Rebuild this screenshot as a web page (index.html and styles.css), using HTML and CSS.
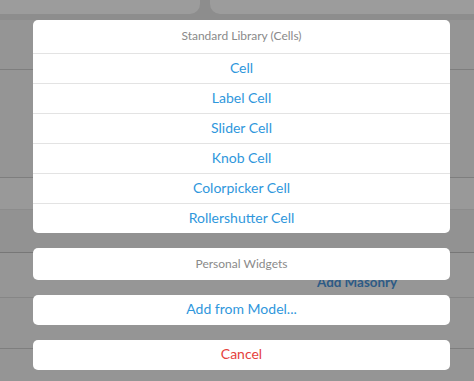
FILE: index.html
```html
<!DOCTYPE html>
<html>
<head>
<meta charset="utf-8">
<link rel="stylesheet" href="styles.css">
</head>
<body>
<div class="page">
  <div class="top">
    <div class="card card-left"></div>
    <div class="card card-right"></div>
  </div>
  <div class="rows">
    <div class="row r1"></div>
    <div class="row r2"></div>
    <div class="row r3"></div>
    <div class="row r4"></div>
    <div class="row r5"></div>
    <div class="row r6 masonry-row"><span class="masonry">Add Masonry</span></div>
    <div class="row r7"></div>
  </div>
</div>
<div class="sheet">
  <div class="group">
    <div class="item header">Standard Library (Cells)</div>
    <div class="item">Cell</div>
    <div class="item">Label Cell</div>
    <div class="item">Slider Cell</div>
    <div class="item">Knob Cell</div>
    <div class="item">Colorpicker Cell</div>
    <div class="item">Rollershutter Cell</div>
  </div>
  <div class="group">
    <div class="item header header-small">Personal Widgets</div>
  </div>
  <div class="group">
    <div class="item">Add from Model...</div>
  </div>
  <div class="group">
    <div class="item cancel">Cancel</div>
  </div>
</div>
</body>
</html>
```

FILE: styles.css
```css
html, body {
  margin: 0;
  padding: 0;
}
body {
  width: 474px;
  height: 381px;
  overflow: hidden;
  background: #949494;
  font-family: Lato, "Open Sans", sans-serif;
  position: relative;
}
.page {
  display: flex;
  flex-direction: column;
}
.top {
  display: flex;
  gap: 10px;
  height: 14px;
  background: #8d8d8d;
  padding-bottom: 6px;
}
.card {
  background: #9c9c9c;
}
.card-left {
  width: 200px;
  border-bottom-right-radius: 10px;
}
.card-right {
  flex: 1;
  border-bottom-left-radius: 10px;
}
.rows {
  display: flex;
  flex-direction: column;
}
.row {
  border-bottom: 1px solid #7e7e7e;
  background: #959595;
}
.r1 { height: 49px; }
.r2 { height: 107px; }
.r3 { height: 31px; background: #999999; border-bottom-color: #8c8c8c; }
.r4 { height: 42px; background: #929292; border-bottom-color: #777; }
.r5 { height: 44px; background: #969696; border-bottom-color: #868686; }
.masonry-row {
  height: 50px;
  position: relative;
}
.masonry {
  position: absolute;
  left: 317px;
  top: -24px;
  font-size: 13.4px;
  font-weight: 700;
  color: #2d5b86;
}
.r7 { height: 40px; border-bottom: none; }

.sheet {
  position: absolute;
  left: 33px;
  top: 20px;
  width: 417px;
  display: flex;
  flex-direction: column;
  gap: 15px;
}
.group {
  background: #ffffff;
  border-radius: 5px;
  overflow: hidden;
  display: flex;
  flex-direction: column;
}
.item {
  box-sizing: border-box;
  height: 30px;
  padding-bottom: 3px;
  border-top: 1px solid #e3e3e3;
  display: flex;
  align-items: center;
  justify-content: center;
  font-size: 14px;
  color: #2f97dc;
}
.item:first-child {
  border-top: none;
}
.header {
  font-size: 12px;
  color: #8a8a8a;
  padding-bottom: 2px;
}
.item.header:first-child {
  height: 33px;
}
.item.header-small:first-child {
  height: 32px;
}
.cancel {
  color: #e5413c;
}
```
